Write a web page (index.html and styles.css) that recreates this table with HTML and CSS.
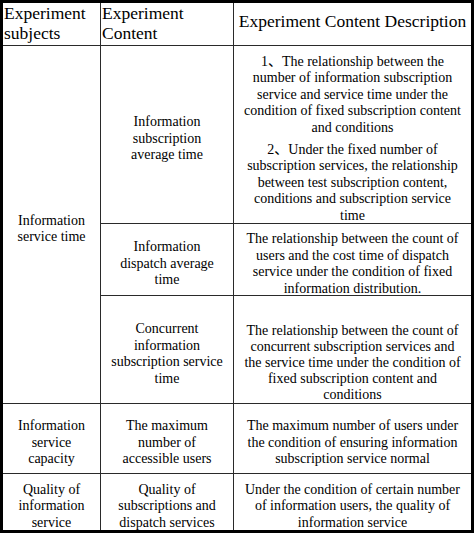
FILE: index.html
```html
<!DOCTYPE html>
<html lang="en">
<head>
<meta charset="utf-8">
<title>Experiment table</title>
<link rel="stylesheet" href="styles.css">
</head>
<body>
<div class="table">
  <div class="cell head head-left">Experiment<br>subjects</div>
  <div class="cell head head-left">Experiment<br>Content</div>
  <div class="cell head head-center">Experiment Content Description</div>

  <div class="cell subject span3">Information<br>service time</div>

  <div class="cell">Information<br>subscription<br>average time</div>
  <div class="cell desc">
    <p>1、The relationship between the<br>number of information subscription<br>service and service time under the<br>condition of fixed subscription content<br>and conditions</p>
    <p>2、Under the fixed number of<br>subscription services, the relationship<br>between test subscription content,<br>conditions and subscription service<br>time</p>
  </div>

  <div class="cell">Information<br>dispatch average<br>time</div>
  <div class="cell desc">The relationship between the count of<br>users and the cost time of dispatch<br>service under the condition of fixed<br>information distribution.</div>

  <div class="cell">Concurrent<br>information<br>subscription service<br>time</div>
  <div class="cell desc desc-low">The relationship between the count of<br>concurrent subscription services and<br>the service time under the condition of<br>fixed subscription content and<br>conditions</div>

  <div class="cell">Information<br>service<br>capacity</div>
  <div class="cell">The maximum<br>number of<br>accessible users</div>
  <div class="cell desc">The maximum number of users under<br>the condition of ensuring information<br>subscription service normal</div>

  <div class="cell">Quality of<br>information<br>service</div>
  <div class="cell">Quality of<br>subscriptions and<br>dispatch services</div>
  <div class="cell desc">Under the condition of certain number<br>of information users, the quality of<br>information service</div>
</div>
</body>
</html>
```
FILE: styles.css
```css
html, body {
  margin: 0;
  padding: 0;
  background: #ffffff;
}

body {
  font-family: "Liberation Serif", "Noto Sans CJK SC", serif;
  color: #000000;
}

.table {
  box-sizing: border-box;
  width: 474px;
  height: 533px;
  border: 3px solid #000000;
  background: #2a2a2a;
  display: grid;
  grid-template-columns: 97px 132px 237px;
  grid-template-rows: 42px 177px 71px 107px 69px 56px;
  gap: 1px;
}

.cell {
  background: #ffffff;
  display: flex;
  flex-direction: column;
  justify-content: center;
  align-items: center;
  text-align: center;
  font-size: 14px;
  line-height: 16.5px;
  padding-top: 9px;
  white-space: nowrap;
  overflow: visible;
}

.head {
  font-size: 17.5px;
  line-height: 19.5px;
  padding-top: 0;
}

.head-left {
  justify-content: flex-start;
  align-items: flex-start;
  text-align: left;
  padding: 1px 0 0 1px;
}

.head-center {
  padding-bottom: 4px;
}

.span3 {
  grid-row: span 3;
}

.desc p {
  margin: 0;
}

.desc p + p {
  margin-top: 5.5px;
}

.desc-low {
  justify-content: flex-start;
  padding-top: 27px;
  line-height: 16px;
}
```
